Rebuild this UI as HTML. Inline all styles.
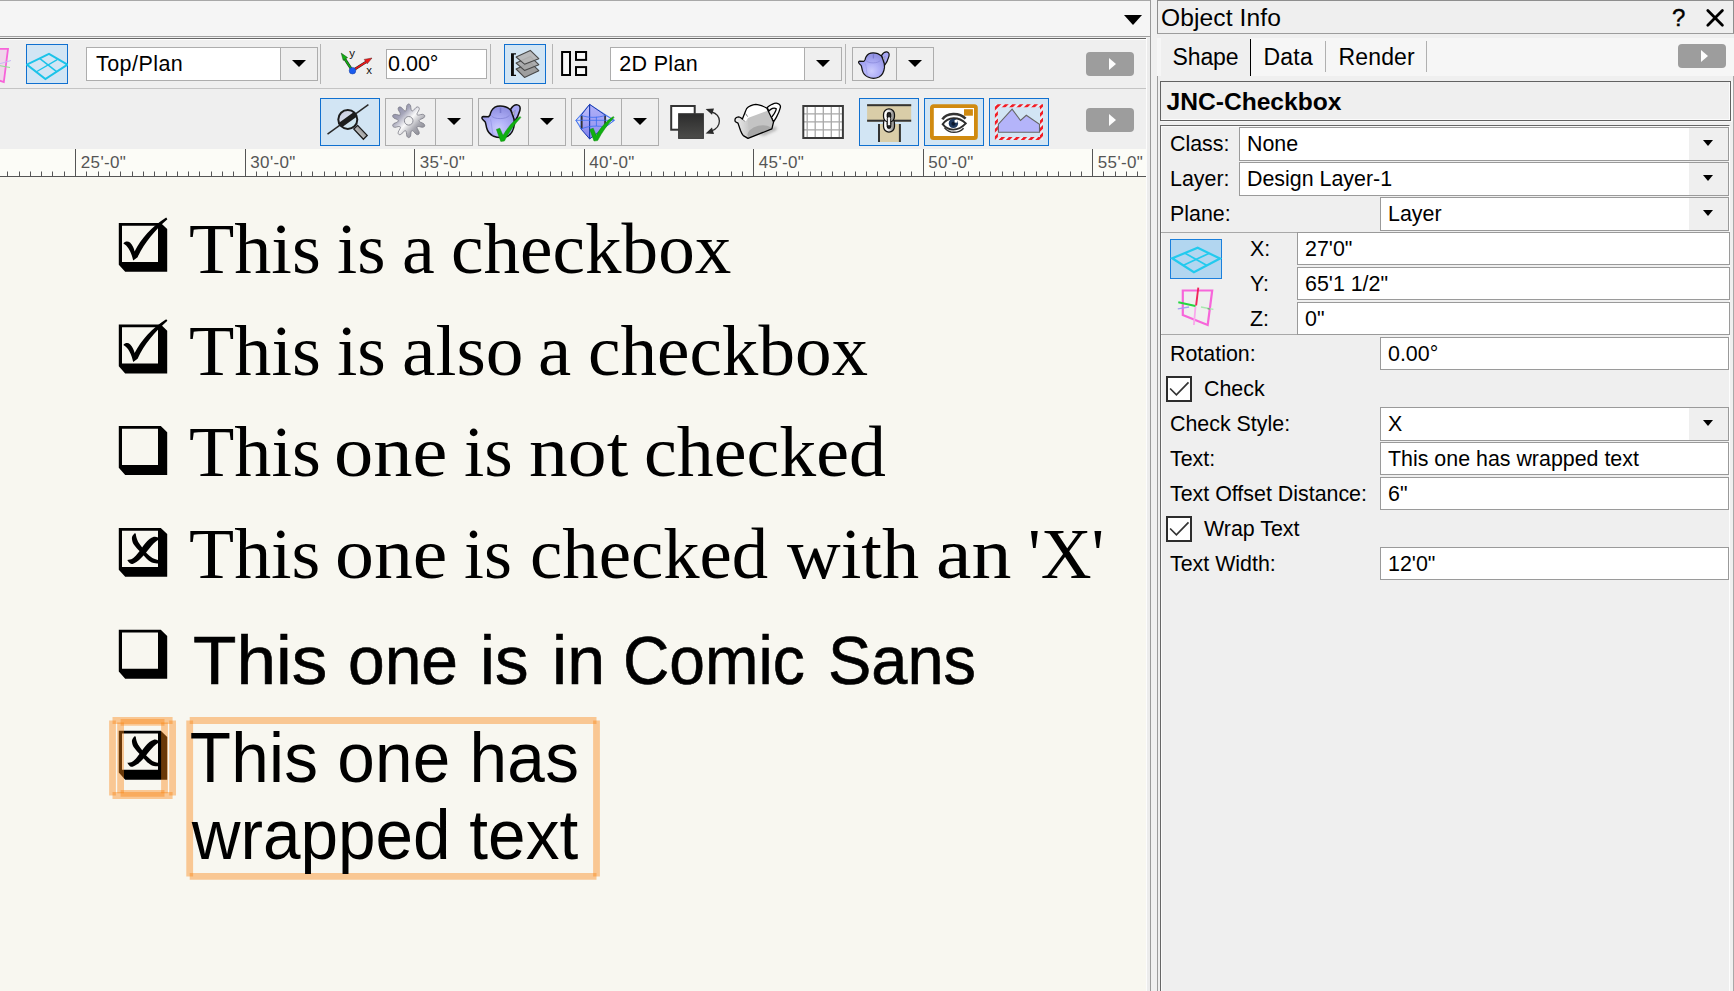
<!DOCTYPE html>
<html>
<head>
<meta charset="utf-8">
<title>Object Info</title>
<style>
*{box-sizing:border-box;margin:0;padding:0}
html,body{width:1734px;height:991px;overflow:hidden}
body{position:relative;background:#efefef;font-family:"Liberation Sans",sans-serif;color:#000}
.abs{position:absolute}
/* top strip */
#topbar{left:0;top:0;width:1150px;height:36px;background:#f5f5f5;border-top:1px solid #a8a8a8}
#tl1{left:0;top:36px;width:1150px;height:1px;background:#a0a0a0}
#tl2{left:0;top:37px;width:1150px;height:1px;background:#f0f0f0}
#tl3{left:0;top:38px;width:1146px;height:1px;background:#666}
#tl4{left:0;top:39px;width:1146px;height:1px;background:#fff}
#strip{left:1146px;top:38px;width:4px;height:953px;background:#ececec;border-left:1px solid #fcfcfc}
#vsep{left:1150px;top:0;width:1px;height:991px;background:#9a9a9a}
#gap{left:1151px;top:0;width:6px;height:991px;background:#f0f0f0}
/* toolbars */
#tb1{left:0;top:40px;width:1146px;height:48px;background:#efefef}
#tbsep{left:0;top:88px;width:1146px;height:1px;background:#c4c4c4}
#tb2{left:0;top:89px;width:1146px;height:60px;background:#efefef}
.btnsel{background:#d2e5f4;border:1px solid #1070d0}
.combo{background:#fff;border:1px solid #adadad}
.combo .arr{position:absolute;right:0;top:0;bottom:0;background:#efefef;border-left:1px solid #adadad}
.tri{position:absolute;width:0;height:0;border-left:8px solid transparent;border-right:8px solid transparent;border-top:9px solid #000}
.vs{width:1px;background:#b4b4b4}
.tbtxt{font-size:21.5px;line-height:24px;white-space:nowrap}
.play{background:#9d9d9d;border-radius:4px}
.play:after{content:"";position:absolute;left:23px;top:6px;border-left:7px solid #fdfdfd;border-top:6px solid transparent;border-bottom:6px solid transparent}
.split{border:1px solid #adadad;background:#efefef}
.split .dv{position:absolute;top:0;bottom:0;width:1px;background:#adadad}
/* ruler */
#ruler{left:0;top:149px;width:1146px;height:28px;background:#fcfcf7;overflow:hidden}
#rulerline{left:0;top:176px;width:1146px;height:1px;background:#555}
.rl{position:absolute;top:5px;font-size:17px;line-height:18px;letter-spacing:0.35px;color:#555;white-space:nowrap}
.mt{position:absolute;top:0;width:1px;height:28px;background:#555}
/* canvas */
#canvas{left:0;top:177px;width:1146px;height:814px;background:#f8f7f0;overflow:hidden}
.ser{position:absolute;font-family:"Liberation Serif",serif;font-size:72.5px;line-height:80px;white-space:nowrap;color:#000}
.san{position:absolute;font-family:"Liberation Sans",sans-serif;white-space:nowrap;color:#000}
.cm{top:620px;font-size:68px;line-height:80px;transform-origin:0 62px;-webkit-text-stroke:0.6px #000}
/* panel */
#ptitle{left:1157px;top:0;width:577px;height:34px;background:#efefef;border:1px solid #8e8e8e;border-bottom-color:#9c9c9c}
#ptabs{left:1157px;top:38px;width:577px;height:38px;background:#f6f6f6}
#pbody{left:1157px;top:76px;width:577px;height:915px;background:#efefef}
.fld{position:absolute;background:#fff;border:1px solid #9a9a9a;height:33px;font-size:21.4px;line-height:32.5px;padding-left:7px;white-space:nowrap;overflow:hidden}
.lbl{position:absolute;font-size:21.4px;line-height:25.5px;white-space:nowrap}
.darr{position:absolute;right:0;top:0;bottom:0;width:39px;background:#efefef}
.darr:after{content:"";position:absolute;left:14px;top:12px;border-left:5px solid transparent;border-right:5px solid transparent;border-top:6px solid #000}
.cb{position:absolute;width:26px;height:26px;background:#fff;border:2px solid #2c2c2c}
</style>
</head>
<body>
<!-- TOP -->
<div id="topbar" class="abs"></div>
<div id="tl1" class="abs"></div><div id="tl2" class="abs"></div><div id="tl3" class="abs"></div><div id="tl4" class="abs"></div>
<div class="abs tri" style="left:1124px;top:15px;border-left-width:9px;border-right-width:9px;border-top-width:10px"></div>
<div id="tb1" class="abs"></div>
<div id="tbsep" class="abs"></div>
<div id="tb2" class="abs"></div>
<div id="strip" class="abs"></div>
<div id="vsep" class="abs"></div>
<div id="gap" class="abs"></div>
<!--TOOLBAR1-->
<!-- pink plane icon (cut off at left) -->
<svg class="abs" style="left:0;top:44px" width="14" height="42" viewBox="0 0 14 42">
<polygon points="-2,4.8 8,4.8 3.8,38 -2,36" fill="#efd6ea" stroke="#f763d9" stroke-width="1.8"/>
<line x1="-1" y1="20" x2="11" y2="16.5" stroke="#c9b8f5" stroke-width="1"/>
<line x1="-1" y1="21.5" x2="10" y2="23.5" stroke="#8fe08f" stroke-width="1"/>
</svg>
<!-- top/plan selected btn -->
<div class="abs btnsel" style="left:26px;top:44px;width:42px;height:40px"></div>
<svg class="abs" style="left:26px;top:44px" width="42" height="40" viewBox="0 0 42 40">
<g fill="none" stroke="#1bc3e9" stroke-linejoin="miter">
<polygon points="23,9.8 41.5,20.6 19.4,35 0.8,20.6" stroke-width="2"/>
<line x1="13.6" y1="14.4" x2="30.6" y2="27.6" stroke-width="1.5"/>
<line x1="31.2" y1="15.6" x2="10" y2="28" stroke-width="1.3"/>
</g>
</svg>
<!-- Top/Plan combo -->
<div class="abs combo" style="left:86px;top:47px;width:232px;height:34px"><div class="arr" style="width:37px"></div></div>
<div class="abs tbtxt" style="left:96px;top:52px;letter-spacing:0.45px">Top/Plan</div>
<div class="abs tri" style="left:292px;top:60px;border-left-width:7px;border-right-width:7px;border-top-width:7px"></div>
<div class="abs vs" style="left:320px;top:44px;height:40px"></div>
<!-- axis icon -->
<svg class="abs" style="left:336px;top:46px" width="42" height="34" viewBox="0 0 42 34">
<line x1="16.5" y1="24.7" x2="8.5" y2="12.5" stroke="#222" stroke-width="2.6"/>
<line x1="16.5" y1="24.7" x2="8.5" y2="12.5" stroke="#12b012" stroke-width="1.6"/>
<polygon points="5.2,7.1 11.6,11.6 7.2,14.4" fill="#12b012" stroke="#1a4a1a" stroke-width="0.5"/>
<line x1="16.5" y1="24.7" x2="30" y2="16" stroke="#222" stroke-width="2.6"/>
<line x1="16.5" y1="24.7" x2="30" y2="16" stroke="#f01818" stroke-width="1.6"/>
<polygon points="36,12 31.2,17.8 28.2,13.4" fill="#f01818" stroke="#5a1a1a" stroke-width="0.5"/>
<circle cx="16.5" cy="24.7" r="3.3" fill="#1a5cf0" stroke="#123a9a" stroke-width="0.5"/>
<text x="13.2" y="10.8" font-family="Liberation Sans" font-size="11.5" fill="#111">y</text>
<text x="30.2" y="27.7" font-family="Liberation Sans" font-size="11.5" fill="#111">x</text>
</svg>
<!-- angle input -->
<div class="abs" style="left:386px;top:49px;width:101px;height:30px;background:#fff;border:1px solid #adadad"></div>
<div class="abs tbtxt" style="left:388px;top:52px">0.00°</div>
<div class="abs vs" style="left:490px;top:44px;height:40px"></div>
<!-- layers btn -->
<div class="abs btnsel" style="left:504px;top:44px;width:42px;height:40px"></div>
<svg class="abs" style="left:504px;top:44px" width="42" height="40" viewBox="0 0 42 40">
<path d="M7,9.2 H12 V10.5 H9.9 V30.7 H12 V32 H7 Z" fill="#0c0c0c"/>
<g stroke="#484848" stroke-width="1.1" stroke-linejoin="round">
<polygon points="12.1,25 26.3,18.4 34.8,26.7 20.5,33.4" fill="#9e9e9e"/>
<polygon points="12.1,19 26.3,12.4 34.8,20.7 20.5,26.4" fill="#a8a8a8" fill-opacity="0.92"/>
<polygon points="12.1,13 26.3,6.4 34.8,14.7 20.5,20.2" fill="#b6b6b6" fill-opacity="0.92"/>
</g>
</svg>
<div class="abs vs" style="left:552px;top:44px;height:40px"></div>
<!-- layout icon -->
<svg class="abs" style="left:560px;top:50px" width="30" height="28" viewBox="0 0 30 28">
<g fill="#f8f8f8" stroke="#000" stroke-width="2">
<rect x="2.1" y="2" width="7.9" height="23"/>
<rect x="16" y="2" width="10.1" height="7.9"/>
<rect x="16" y="17.1" width="10.1" height="7.9"/>
</g>
</svg>
<!-- 2D Plan combo -->
<div class="abs combo" style="left:610px;top:47px;width:232px;height:34px"><div class="arr" style="width:37px"></div></div>
<div class="abs tbtxt" style="left:619.3px;top:52px;letter-spacing:0.32px">2D Plan</div>
<div class="abs tri" style="left:816px;top:60px;border-left-width:7px;border-right-width:7px;border-top-width:7px"></div>
<div class="abs vs" style="left:845px;top:44px;height:40px"></div>
<!-- teapot split -->
<div class="abs split" style="left:852px;top:47px;width:82px;height:34px"><div class="dv" style="left:43px"></div></div>
<svg class="abs" style="left:0;top:0" width="0" height="0"><defs>
<radialGradient id="tpg" cx="0.5" cy="0.72" r="0.62"><stop offset="0" stop-color="#ccccfc"/><stop offset="0.45" stop-color="#b2b2f8"/><stop offset="1" stop-color="#9494e4"/></radialGradient>
<g id="teapot">
<path d="M28.4,7.6 C30,5 32.4,3.7 33.9,3.9 C36,4.3 36.5,6 35.9,8.4 C35.1,11.6 33.6,14.8 31.2,18 L30.4,12 Z" fill="#a8a8f4" stroke="#111" stroke-width="1.2" stroke-linejoin="round"/>
<path d="M29.3,10.8 L32.3,8 L31.2,12.8 Z" fill="#b8b8b8" stroke="#7c7cc0" stroke-width="0.4"/>
<path d="M10.8,13.4 L6.6,13.2 C5.4,13.4 5.2,14.8 6.2,15.6 L8.2,17.6 C8.8,19.4 9,21.2 9.4,22.6 C10,25 12,27.6 15,29 C18,30.4 23,30.4 26,29 C29,27.4 31,24 31.5,19.4 C31.7,17 31.2,14.6 30.2,12.4 C29.6,10.6 28.9,9 28.4,8 C26,5.6 23,4.8 20.1,4.8 C17,4.8 14.4,6.4 13.2,8.6 C12.6,9.8 12.2,11 12.1,11.8 C11.6,12.6 11.2,13 10.8,13.4 Z" fill="url(#tpg)" stroke="#111" stroke-width="1.2" stroke-linejoin="round"/>
<path d="M13.2,12.6 C15,15.6 25,15.8 27.6,12.2" fill="none" stroke="#8686d8" stroke-width="0.7"/>
<path d="M12.4,15.4 C13.4,19 13.4,24 14.6,28.4" fill="none" stroke="#9a9ae8" stroke-width="0.7"/>
<path d="M20.4,6.2 V10.4" fill="none" stroke="#7c7cd0" stroke-width="1.3"/>
</g></defs></svg>
<svg class="abs" style="left:852.7px;top:47.8px" width="40" height="34" viewBox="0 0 40 34"><use href="#teapot"/></svg>
<div class="abs tri" style="left:908px;top:60px;border-left-width:7px;border-right-width:7px;border-top-width:7px"></div>
<!-- play -->
<div class="abs play" style="left:1086px;top:52px;width:48px;height:24px"></div>
<!--/TOOLBAR1-->
<!--TOOLBAR2-->
<!-- magnifier selected -->
<div class="abs btnsel" style="left:320px;top:98px;width:60px;height:48px"></div>
<svg class="abs" style="left:320px;top:98px" width="60" height="48" viewBox="0 0 60 48">
<defs>
<linearGradient id="lens" x1="0" y1="0" x2="1" y2="1"><stop offset="0" stop-color="#c8c8dc"/><stop offset="0.5" stop-color="#d4dcec"/><stop offset="1" stop-color="#c8f2f4"/></linearGradient>
<linearGradient id="hnd" x1="0" y1="1" x2="1" y2="0"><stop offset="0" stop-color="#f0f0f0"/><stop offset="1" stop-color="#6a6a6a"/></linearGradient>
<clipPath id="lc"><circle cx="27.8" cy="21.4" r="9.2"/></clipPath>
</defs>
<line x1="7.5" y1="36.1" x2="48.4" y2="6.6" stroke="#2a2a2a" stroke-width="1.5"/>
<polygon points="33.8,31 37.6,27.4 47.2,37.4 43.4,41.2" fill="url(#hnd)" stroke="#1c1c1c" stroke-width="1.3"/>
<circle cx="27.8" cy="21.4" r="9.5" fill="url(#lens)" stroke="#1c1c1c" stroke-width="2"/>
<line x1="10" y1="34.6" x2="46" y2="8.6" stroke="#1c1c1c" stroke-width="5.4" clip-path="url(#lc)"/>
</svg>
<!-- gear split -->
<div class="abs split" style="left:385px;top:98px;width:88px;height:48px"><div class="dv" style="left:49px"></div></div>
<svg class="abs" style="left:390px;top:102px" width="38" height="38" viewBox="-19 -19 38 38">
<defs><linearGradient id="gg" x1="0" y1="0" x2="1" y2="1"><stop offset="0.05" stop-color="#8888a4"/><stop offset="0.3" stop-color="#a4a4b8"/><stop offset="0.5" stop-color="#fafafa"/><stop offset="0.7" stop-color="#a8a8b0"/><stop offset="0.95" stop-color="#808088"/></linearGradient></defs>
<g transform="translate(-0.3,-0.2)">
<path fill="url(#gg)" stroke="#787884" stroke-width="0.8" d="M0.0,-16.8L0.5,-16.7L1.0,-16.4L1.5,-15.9L1.9,-15.1L2.1,-13.4L2.3,-11.8L2.5,-11.0L2.7,-10.4L2.9,-10.1L3.2,-9.9L3.6,-9.9L4.0,-10.0L4.5,-10.3L5.1,-10.9L6.2,-12.1L7.3,-13.3L8.1,-13.7L8.8,-13.9L9.4,-13.8L9.9,-13.6L10.2,-13.2L10.5,-12.7L10.5,-11.9L10.4,-11.1L9.6,-9.6L8.8,-8.2L8.5,-7.5L8.3,-6.9L8.3,-6.4L8.4,-6.1L8.7,-5.9L9.1,-5.8L9.7,-5.7L10.5,-5.8L12.1,-6.2L13.7,-6.5L14.6,-6.3L15.3,-6.0L15.7,-5.7L16.0,-5.2L16.0,-4.7L15.9,-4.1L15.5,-3.5L14.9,-2.8L13.4,-2.1L11.9,-1.5L11.2,-1.1L10.8,-0.7L10.5,-0.3L10.4,-0.0L10.5,0.3L10.8,0.7L11.2,1.1L11.9,1.5L13.4,2.1L14.9,2.8L15.5,3.5L15.9,4.1L16.0,4.7L16.0,5.2L15.7,5.7L15.3,6.0L14.6,6.3L13.7,6.5L12.1,6.2L10.5,5.8L9.7,5.7L9.1,5.8L8.7,5.9L8.4,6.1L8.3,6.4L8.3,6.9L8.5,7.5L8.8,8.2L9.6,9.6L10.4,11.1L10.5,11.9L10.5,12.7L10.2,13.2L9.9,13.6L9.4,13.8L8.8,13.9L8.1,13.7L7.3,13.3L6.2,12.1L5.1,10.9L4.5,10.3L4.0,10.0L3.6,9.9L3.2,9.9L2.9,10.1L2.7,10.4L2.5,11.0L2.3,11.8L2.1,13.4L1.9,15.1L1.5,15.9L1.0,16.4L0.5,16.7L0.0,16.8L-0.5,16.7L-1.0,16.4L-1.5,15.9L-1.9,15.1L-2.1,13.4L-2.3,11.8L-2.5,11.0L-2.7,10.4L-2.9,10.1L-3.2,9.9L-3.6,9.9L-4.0,10.0L-4.5,10.3L-5.1,10.9L-6.2,12.1L-7.3,13.3L-8.1,13.7L-8.8,13.9L-9.4,13.8L-9.9,13.6L-10.2,13.2L-10.5,12.7L-10.5,11.9L-10.4,11.1L-9.6,9.6L-8.8,8.2L-8.5,7.5L-8.3,6.9L-8.3,6.4L-8.4,6.1L-8.7,5.9L-9.1,5.8L-9.7,5.7L-10.5,5.8L-12.1,6.2L-13.7,6.5L-14.6,6.3L-15.3,6.0L-15.7,5.7L-16.0,5.2L-16.0,4.7L-15.9,4.1L-15.5,3.5L-14.9,2.8L-13.4,2.1L-11.9,1.5L-11.2,1.1L-10.8,0.7L-10.5,0.3L-10.4,0.0L-10.5,-0.3L-10.8,-0.7L-11.2,-1.1L-11.9,-1.5L-13.4,-2.1L-14.9,-2.8L-15.5,-3.5L-15.9,-4.1L-16.0,-4.7L-16.0,-5.2L-15.7,-5.7L-15.3,-6.0L-14.6,-6.3L-13.7,-6.5L-12.1,-6.2L-10.5,-5.8L-9.7,-5.7L-9.1,-5.8L-8.7,-5.9L-8.4,-6.1L-8.3,-6.4L-8.3,-6.9L-8.5,-7.5L-8.8,-8.2L-9.6,-9.6L-10.4,-11.1L-10.5,-11.9L-10.5,-12.7L-10.2,-13.2L-9.9,-13.6L-9.4,-13.8L-8.8,-13.9L-8.1,-13.7L-7.3,-13.3L-6.2,-12.1L-5.1,-10.9L-4.5,-10.3L-4.0,-10.0L-3.6,-9.9L-3.2,-9.9L-2.9,-10.1L-2.7,-10.4L-2.5,-11.0L-2.3,-11.8L-2.1,-13.4L-1.9,-15.1L-1.5,-15.9L-1.0,-16.4L-0.5,-16.7Z"/>
<circle cx="0" cy="0" r="4.3" fill="#f0f0f0" stroke="#8a8a94" stroke-width="1"/>
</g>
</svg>
<div class="abs tri" style="left:447px;top:118px;border-left-width:7px;border-right-width:7px;border-top-width:7px"></div>
<!-- teapot check split -->
<div class="abs split" style="left:478px;top:98px;width:88px;height:48px"><div class="dv" style="left:49px"></div></div>
<svg class="abs" style="left:475.2px;top:100px" width="52" height="46" viewBox="0 0 52 46"><g transform="scale(1.25)"><use href="#teapot"/></g><g transform="translate(4.8,0)"><path d="M16.6,29.4 L20,28.2 L23.2,35.6 C28,27 34,20.4 40.4,16.6 L41,17.6 C35,24 29,32 24.6,41 L21,41.4 Z" fill="#10b010" stroke="#0a8a0a" stroke-width="0.5"/></g></svg>
<div class="abs tri" style="left:540px;top:118px;border-left-width:7px;border-right-width:7px;border-top-width:7px"></div>
<!-- cube check split -->
<div class="abs split" style="left:571px;top:98px;width:88px;height:48px"><div class="dv" style="left:49px"></div></div>
<svg class="abs" style="left:573px;top:100px" width="46" height="44" viewBox="0 0 46 44">
<defs><linearGradient id="cb1" x1="0" y1="0" x2="0" y2="1"><stop offset="0" stop-color="#c6c6fc"/><stop offset="1" stop-color="#7c7cec"/></linearGradient>
<linearGradient id="cb2" x1="0" y1="0" x2="0" y2="1"><stop offset="0" stop-color="#b0b0f8"/><stop offset="1" stop-color="#9090f0"/></linearGradient></defs>
<polygon points="16.6,4.4 41.3,20.3 16.6,38.9 2.9,20.3" fill="#cfd6fa" fill-opacity="0.55" stroke="#3a70f0" stroke-width="0.7"/>
<polygon points="16.6,4.4 8,15.4 8,29 16.6,38.9" fill="url(#cb1)" stroke="#1c3cb0" stroke-width="1"/>
<polygon points="16.6,4.4 32.6,15.4 32.6,27 16.6,38.9" fill="url(#cb2)" stroke="#1c3cb0" stroke-width="1"/>
<line x1="8.8" y1="15.4" x2="8.8" y2="29" stroke="#333" stroke-width="1.6"/>
<line x1="32" y1="15.4" x2="32" y2="27" stroke="#333" stroke-width="1.6"/>
<line x1="16.6" y1="4.4" x2="16.6" y2="38.9" stroke="#1c3cb0" stroke-width="1"/>
<g fill="none" stroke="#3a6cf0" stroke-width="0.8">
<path d="M2.9,20.3 H41.3"/><path d="M8,15.4 C16,18 24,18 32.6,15.4"/><path d="M8,29 C16,25.6 24,25.6 32.6,27"/><path d="M23.4,16.8 V26"/><path d="M2.9,20.3 L8,15.4 M2.9,20.3 L8,29 M41.3,20.3 L32.6,15.4 M41.3,20.3 L32.6,27"/>
</g>
<path d="M16.8,29.4 L20.2,28.2 L23.2,35.4 C28,27 34,20.4 40.4,16.6 L41,17.6 C35,24 29,32 24.6,40.6 L21,41 Z" fill="#10b010" stroke="#0a8a0a" stroke-width="0.5"/>
</svg>
<div class="abs tri" style="left:633px;top:118px;border-left-width:7px;border-right-width:7px;border-top-width:7px"></div>
<!-- swap icon -->
<svg class="abs" style="left:668px;top:102px" width="56" height="40" viewBox="0 0 56 40">
<defs><linearGradient id="dk" x1="0" y1="0" x2="0" y2="1"><stop offset="0" stop-color="#2c2c2c"/><stop offset="1" stop-color="#4c4c4a"/></linearGradient></defs>
<rect x="3.2" y="4" width="23.5" height="23.7" fill="#fff" stroke="#333" stroke-width="2"/>
<rect x="10.6" y="11.7" width="24.8" height="24.7" fill="url(#dk)" stroke="#3a3a3a" stroke-width="1"/>
<path d="M43.5,9.8 C54,13 54,25 43.5,29" fill="none" stroke="#2a2a2a" stroke-width="1.3"/>
<polygon points="37.6,7 46,6.6 44,12.8" fill="#2a2a2a"/>
<polygon points="37.6,31.4 46,32 44,25.6" fill="#2a2a2a"/>
</svg>
<!-- gray teapot -->
<svg class="abs" style="left:728px;top:98px" width="60" height="46" viewBox="0 0 60 46">
<defs><clipPath id="tpc"><path d="M7,21.8 C7,20 8.4,19.2 10.7,18.8 C12,18.8 13,20 14.4,21.1 L17.2,13.9 C17.8,12.4 18.2,11.4 18.6,10.7 C19.6,9.4 21,8.4 22.3,7.9 C24,7 26,6.4 27.8,6.3 C29.6,6.6 31.6,7.1 33.4,7.7 C35.4,8.4 37.2,9.2 38.9,10.2 L43.6,20 L45.5,24.1 L43.9,30.9 L20,40.4 L15.3,37.6 C14,36 13.2,34.4 12.5,32.5 L10,25.1 L7.4,23.7 C7,23 6.9,22.4 7,21.8 Z"/></clipPath>
<filter id="bl" x="-50%" y="-50%" width="200%" height="200%"><feGaussianBlur stdDeviation="1.6"/></filter>
<linearGradient id="tlg" x1="0" y1="0" x2="1" y2="0"><stop offset="0" stop-color="#f6f6f6"/><stop offset="1" stop-color="#c4c4c4"/></linearGradient></defs>
<path d="M30,36.5 L44,31 L47,28 L49,31.5 L36,37.5 Z" fill="#000" fill-opacity="0.3" filter="url(#bl)"/>
<path d="M39.2,9.6 C40.8,8.2 42.4,7.2 44.1,6.3 C46,5.4 47.8,5 49.2,5.3 C51.4,6 52.8,7.4 52.4,9.3 C51.6,12.6 50.2,15.8 48.7,18.6 C47.8,20.4 46.6,22.2 45.5,23.9 L43.4,19.6 C44.4,18.2 45.4,16.8 46.4,15.3 C47.4,13.6 48.2,12 48.3,10.7 C47.2,10 45.8,10 44.5,10.4 C43.2,11 42,11.9 40.8,13 Z" fill="#fff" stroke="#000" stroke-width="1.3" stroke-linejoin="round"/>
<path d="M7,21.8 C7,20 8.4,19.2 10.7,18.8 C12,18.8 13,20 14.4,21.1 L17.2,13.9 C17.8,12.4 18.2,11.4 18.6,10.7 C19.6,9.4 21,8.4 22.3,7.9 C24,7 26,6.4 27.8,6.3 C29.6,6.6 31.6,7.1 33.4,7.7 C35.4,8.4 37.2,9.2 38.9,10.2 L43.6,20 L45.5,24.1 L43.9,30.9 L20,40.4 L15.3,37.6 C14,36 13.2,34.4 12.5,32.5 L10,25.1 L7.4,23.7 C7,23 6.9,22.4 7,21.8 Z" fill="#fff"/>
<g clip-path="url(#tpc)">
<polygon points="5,25.6 39.4,12.8 50,34 16,46" fill="#c4c4c4"/>
<polygon points="5,20 19.5,20 22,42 5,42" fill="url(#tlg)"/>
<polygon points="14.4,21.1 18,12 20.4,19.4 17.4,24" fill="#fff"/>
<ellipse cx="31.8" cy="34.6" rx="12.6" ry="7" transform="rotate(-14 31.8 34.6)" fill="#a8a8a8"/>
</g>
<path d="M7,21.8 C7,20 8.4,19.2 10.7,18.8 C12,18.8 13,20 14.4,21.1 L17.2,13.9 C17.8,12.4 18.2,11.4 18.6,10.7 C19.6,9.4 21,8.4 22.3,7.9 C24,7 26,6.4 27.8,6.3 C29.6,6.6 31.6,7.1 33.4,7.7 C35.4,8.4 37.2,9.2 38.9,10.2 L43.6,20 L45.5,24.1 L43.9,30.9 L20,40.4 L15.3,37.6 C14,36 13.2,34.4 12.5,32.5 L10,25.1 L7.4,23.7 C7,23 6.9,22.4 7,21.8 Z" fill="none" stroke="#000" stroke-width="1.3" stroke-linejoin="round"/>
<path d="M17.6,15.6 L19.6,18.6 M14.6,21.2 L17,23.6" fill="none" stroke="#222" stroke-width="0.6"/>
</svg>
<!-- grid -->
<svg class="abs" style="left:800px;top:103px" width="48" height="38" viewBox="0 0 48 38">
<rect x="3.3" y="3" width="39.6" height="32" fill="#fff"/>
<g stroke="#a8a8a8" stroke-width="1.3">
<path d="M7.2,3 V35 M15.2,3 V35 M23.3,3 V35 M31.3,3 V35 M39.3,3 V35"/>
<path d="M3,10.9 H43 M3,18.9 H43 M3,26.9 H43"/>
</g>
<rect x="3.3" y="3" width="39.6" height="32" fill="none" stroke="#3a3a3a" stroke-width="2"/>
</svg>
<!-- link btn -->
<div class="abs btnsel" style="left:859px;top:98px;width:60px;height:48px"></div>
<svg class="abs" style="left:859px;top:98px" width="60" height="48" viewBox="0 0 60 48">
<defs><linearGradient id="ch" x1="0" y1="0" x2="1" y2="0"><stop offset="0" stop-color="#fff"/><stop offset="0.5" stop-color="#e0e0e0"/><stop offset="1" stop-color="#9a9a9a"/></linearGradient></defs>
<rect x="8.1" y="6.2" width="44.1" height="17.5" fill="#d9cda8"/>
<rect x="8.1" y="6.2" width="44.1" height="2" fill="#333"/>
<rect x="8.1" y="21.7" width="44.1" height="2" fill="#333"/>
<rect x="19" y="26" width="22.9" height="18" fill="#d9cda8"/>
<rect x="19" y="26" width="2" height="18" fill="#333"/>
<rect x="39.9" y="26" width="2" height="18" fill="#333"/>
<rect x="26.4" y="21.4" width="7.2" height="10.8" rx="3.6" fill="#2a2a2a" stroke="#111" stroke-width="5"/>
<rect x="26.4" y="21.4" width="7.2" height="10.8" rx="3.6" fill="none" stroke="url(#ch)" stroke-width="2.5"/>
<rect x="26.4" y="12.8" width="7.2" height="9.6" rx="3.6" fill="#2a2a2a" stroke="#111" stroke-width="5"/>
<rect x="26.4" y="12.8" width="7.2" height="9.6" rx="3.6" fill="none" stroke="url(#ch)" stroke-width="2.5"/>
<rect x="28.3" y="18.6" width="3.4" height="9.4" rx="1.7" fill="#f2f2f2" stroke="#111" stroke-width="1"/>
</svg>
<!-- eye btn -->
<div class="abs btnsel" style="left:924px;top:98px;width:60px;height:48px"></div>
<svg class="abs" style="left:924px;top:98px" width="60" height="48" viewBox="0 0 60 48">
<rect x="7.9" y="8.1" width="44" height="31.9" rx="1.6" fill="#fff" stroke="#d08a10" stroke-width="3.8"/>
<rect x="40" y="11.2" width="8.9" height="6.5" fill="#d08a10"/>
<path d="M18.6,26.2 C24,18.4 34.6,18.4 41.8,25.4 C34,33.8 24,33.2 18.6,26.2 Z" fill="#fff" stroke="#2c2c2c" stroke-width="1.9"/>
<circle cx="29.4" cy="25.4" r="4.7" fill="#1f3a60"/>
<circle cx="29.4" cy="25.8" r="2" fill="#0c1a30"/>
<rect x="30.6" y="22" width="2.8" height="2.6" fill="#fff"/>
<path d="M18.4,21.4 C22.6,14.6 35,14 41.6,20.6" fill="none" stroke="#333" stroke-width="2.6"/>
<path d="M20.4,29.6 C25.4,36 34.4,35.6 39.6,30.2" fill="none" stroke="#333" stroke-width="1.5"/>
</svg>
<!-- image btn -->
<div class="abs btnsel" style="left:989px;top:98px;width:60px;height:48px"></div>
<svg class="abs" style="left:989px;top:98px" width="60" height="48" viewBox="0 0 60 48">
<defs><pattern id="hz" width="5.2" height="5.2" patternUnits="userSpaceOnUse" patternTransform="rotate(-45)"><rect width="5.2" height="5.2" fill="#e8eef8"/><rect width="5.2" height="2.7" fill="#f21c24"/></pattern></defs>
<path fill="url(#hz)" fill-rule="evenodd" d="M5.9,6.2 H54 V41.9 H5.9 Z M8.9,9.2 V38.9 H51 V9.2 Z"/>
<polygon points="9.4,34.3 9.4,26.2 23.1,11.2 31.5,22.5 37.3,17.3 50.5,26.2 50.5,34.3" fill="#b4b4fa" stroke="#666" stroke-width="1.1"/>
</svg>
<div class="abs play" style="left:1086px;top:108px;width:48px;height:24px"></div>
<!--/TOOLBAR2-->
<!--RULER-->
<div id="ruler" class="abs">
<svg class="abs" style="left:0;top:0" width="1147" height="28"><path d="M7.5,22.5V28M19.5,22.5V28M30.5,22.5V28M41.5,22.5V28M52.5,22.5V28M64.5,22.5V28M75.5,0V28M86.5,22.5V28M98.5,22.5V28M109.5,22.5V28M120.5,22.5V28M132.5,22.5V28M143.5,22.5V28M154.5,22.5V28M166.5,22.5V28M177.5,22.5V28M188.5,22.5V28M199.5,22.5V28M211.5,22.5V28M222.5,22.5V28M233.5,22.5V28M245.5,0V28M256.5,22.5V28M267.5,22.5V28M279.5,22.5V28M290.5,22.5V28M301.5,22.5V28M312.5,22.5V28M324.5,22.5V28M335.5,22.5V28M346.5,22.5V28M358.5,22.5V28M369.5,22.5V28M380.5,22.5V28M392.5,22.5V28M403.5,22.5V28M414.5,0V28M425.5,22.5V28M437.5,22.5V28M448.5,22.5V28M459.5,22.5V28M471.5,22.5V28M482.5,22.5V28M493.5,22.5V28M505.5,22.5V28M516.5,22.5V28M527.5,22.5V28M538.5,22.5V28M550.5,22.5V28M561.5,22.5V28M572.5,22.5V28M584.5,0V28M595.5,22.5V28M606.5,22.5V28M618.5,22.5V28M629.5,22.5V28M640.5,22.5V28M651.5,22.5V28M663.5,22.5V28M674.5,22.5V28M685.5,22.5V28M697.5,22.5V28M708.5,22.5V28M719.5,22.5V28M731.5,22.5V28M742.5,22.5V28M753.5,0V28M764.5,22.5V28M776.5,22.5V28M787.5,22.5V28M798.5,22.5V28M810.5,22.5V28M821.5,22.5V28M832.5,22.5V28M844.5,22.5V28M855.5,22.5V28M866.5,22.5V28M877.5,22.5V28M889.5,22.5V28M900.5,22.5V28M911.5,22.5V28M923.5,0V28M934.5,22.5V28M945.5,22.5V28M957.5,22.5V28M968.5,22.5V28M979.5,22.5V28M990.5,22.5V28M1002.5,22.5V28M1013.5,22.5V28M1024.5,22.5V28M1036.5,22.5V28M1047.5,22.5V28M1058.5,22.5V28M1070.5,22.5V28M1081.5,22.5V28M1092.5,0V28M1103.5,22.5V28M1115.5,22.5V28M1126.5,22.5V28M1137.5,22.5V28" stroke="#555" stroke-width="1" fill="none"/></svg>
<div class="rl" style="left:80.8px">25'-0&quot;</div>
<div class="rl" style="left:250.3px">30'-0&quot;</div>
<div class="rl" style="left:419.8px">35'-0&quot;</div>
<div class="rl" style="left:589.3px">40'-0&quot;</div>
<div class="rl" style="left:758.8px">45'-0&quot;</div>
<div class="rl" style="left:928.3px">50'-0&quot;</div>
<div class="rl" style="left:1097.8px">55'-0&quot;</div>
</div>
<div id="rulerline" class="abs"></div>
<!--/RULER-->
<!--CANVAS-->
<div id="canvas" class="abs"></div>
<svg class="abs" style="left:0;top:177px" width="1147" height="814" viewBox="0 177 1147 814">
<defs>
<path id="bx" d="M0,0 H42 L48.4,6.2 V48.9 H6.4 L0,41.8 Z M3.2,2.8 V39 H39.2 V2.8 Z" fill-rule="evenodd" fill="#000"/>
<path id="ck" d="M4.6,20.5 C6.2,18.3 9.2,17.9 11.2,19.7 C13.7,22.1 15.2,25.5 15.8,28.5 C22.2,16.1 33.2,3.6 47.4,-5.3 L48.6,-3.7 C36.2,7.1 25.2,20.1 18.8,34.3 L14.4,37.5 C12.7,30.1 9.7,23.1 4.6,20.5 Z" fill="#000"/>
<g id="xm" fill="#000">
<path d="M16.2,5.2 C14,7 13,9 13.1,10.5 C13.3,13 14,15 15.2,16.8 C17,19.4 19,21.4 20.8,23.2 C23,25.6 25.4,28.4 27.9,30.9 C30,33 32.4,34.6 35,35.2 C36.5,35.5 38,35.6 39.2,35.5 L39.2,32 C37,31.6 35,31 33.6,30.2 C31.5,28.8 29.6,27 27.9,25.3 C26.4,23.6 25,21.8 23.7,20 C22,17.6 20.5,15.6 19.4,14 C18,11.4 17.2,8.6 17,6.2 Z"/>
<path d="M39.2,9.6 C37.6,8.8 36.4,8.7 35,8.9 C33.4,9.4 32,10.2 30.7,11.2 C29.2,12.4 27.8,13.8 26.5,15.4 C25,17.2 23.6,19.2 22.3,21 C21,22.8 19.6,24.8 18,26.7 C16.6,28.4 15.2,29.8 13.8,30.6 C12,31.6 10.2,32 8.5,32 C9.2,33.4 10,34.4 10.9,35.2 C11.8,35.9 12.8,36.2 13.8,36 C15.2,35.6 16.6,34.8 18,33.8 C19.6,32.8 21,31.6 22.3,30.2 C23.8,28.8 25.2,27.2 26.5,25.6 C28,23.8 29.4,22 30.7,20.3 C32,18.6 33.4,17 35,15.4 C36.4,14 37.8,13 39.2,12.2 Z"/>
</g>
</defs>
<use href="#bx" x="118.8" y="222.9"/><use href="#ck" x="118.8" y="222.9"/>
<use href="#bx" x="118.8" y="324.5"/><use href="#ck" x="118.8" y="324.5"/>
<use href="#bx" x="118.8" y="426"/>
<use href="#bx" x="118.8" y="527.9"/><use href="#xm" x="118.8" y="527.9"/>
<use href="#bx" x="118.8" y="629.8"/>
<use href="#bx" x="118.8" y="730.8"/><use href="#xm" x="118.8" y="730.8"/>
<!-- selection highlights -->
<g fill="none" stroke="#fa8513" stroke-opacity="0.42" stroke-width="6.8">
<path d="M112.5,720.5V795.5"/><path d="M172.6,720.5V795.5"/><path d="M112.5,720.5H172.6"/><path d="M112.5,795.5H172.6"/>
<path d="M120.6,722.4V793.3"/><path d="M164.5,722.4V793.3"/><path d="M120.6,722.4H164.5"/><path d="M120.6,793.3H164.5"/>
<path d="M189.7,720.5V876.4"/><path d="M596.5,720.5V876.4"/><path d="M189.7,720.5H596.5"/><path d="M189.7,876.4H596.5"/>
</g>
</svg>
<div class="ser" id="t1_0" style="left:189.0px;top:209px;transform-origin:0 50%;transform:scaleX(1.022)">This</div>
<div class="ser" id="t1_1" style="left:336.8px;top:209px;transform-origin:0 50%;transform:scaleX(1.002)">is</div>
<div class="ser" id="t1_2" style="left:402.4px;top:209px;transform-origin:0 50%;transform:scaleX(1.017)">a</div>
<div class="ser" id="t1_3" style="left:451.4px;top:209px;transform-origin:0 50%;transform:scaleX(1.009)">checkbox</div>
<div class="ser" id="t2_0" style="left:189.0px;top:310.5px;transform-origin:0 50%;transform:scaleX(1.023)">This</div>
<div class="ser" id="t2_1" style="left:337.0px;top:310.5px;transform-origin:0 50%;transform:scaleX(1.011)">is</div>
<div class="ser" id="t2_2" style="left:401.5px;top:310.5px;transform-origin:0 50%;transform:scaleX(1.040)">also</div>
<div class="ser" id="t2_3" style="left:537.9px;top:310.5px;transform-origin:0 50%;transform:scaleX(1.031)">a</div>
<div class="ser" id="t2_4" style="left:587.6px;top:310.5px;transform-origin:0 50%;transform:scaleX(1.008)">checkbox</div>
<div class="ser" id="t3_0" style="left:189.0px;top:412px;transform-origin:0 50%;transform:scaleX(1.023)">This</div>
<div class="ser" id="t3_1" style="left:334.3px;top:412px;transform-origin:0 50%;transform:scaleX(1.083)">one</div>
<div class="ser" id="t3_2" style="left:464.4px;top:412px;transform-origin:0 50%;transform:scaleX(1.009)">is</div>
<div class="ser" id="t3_3" style="left:528.7px;top:412px;transform-origin:0 50%;transform:scaleX(1.071)">not</div>
<div class="ser" id="t3_4" style="left:643.8px;top:412px;transform-origin:0 50%;transform:scaleX(1.019)">checked</div>
<div class="ser" id="t4_0" style="left:188.8px;top:513.5px;transform-origin:0 50%;transform:scaleX(1.019)">This</div>
<div class="ser" id="t4_1" style="left:335.4px;top:513.5px;transform-origin:0 50%;transform:scaleX(1.073)">one</div>
<div class="ser" id="t4_2" style="left:464.4px;top:513.5px;transform-origin:0 50%;transform:scaleX(0.991)">is</div>
<div class="ser" id="t4_3" style="left:529.8px;top:513.5px;transform-origin:0 50%;transform:scaleX(1.003)">checked</div>
<div class="ser" id="t4_4" style="left:787.2px;top:513.5px;transform-origin:0 50%;transform:scaleX(1.025)">with</div>
<div class="ser" id="t4_5" style="left:935.5px;top:513.5px;transform-origin:0 50%;transform:scaleX(1.102)">an</div>
<div class="ser" id="t4_6" style="left:1028.3px;top:513.5px;transform-origin:0 50%;transform:scaleX(0.971)">'X'</div>
<div class="san cm" id="w0" style="left:193.0px;transform:scaleX(1.046)">This</div>
<div class="san cm" id="w1" style="left:348.3px;transform:scaleX(0.970)">one</div>
<div class="san cm" id="w2" style="left:480.1px;transform:scaleX(0.986)">is</div>
<div class="san cm" id="w3" style="left:552.0px;transform:scaleX(1.002)">in</div>
<div class="san cm" id="w4" style="left:623.2px;transform:scaleX(0.943)">Comic</div>
<div class="san cm" id="w5" style="left:828.1px;transform:scaleX(0.955)">Sans</div>
<div class="san" id="t6" style="left:189.7px;top:720px;font-size:67.5px;line-height:77px;letter-spacing:0.25px;transform:scaleY(1.035);transform-origin:0 61.8px">This one has</div>
<div class="san" id="t7" style="left:191.7px;top:797.2px;font-size:67.5px;line-height:77px;transform:scaleY(1.035);transform-origin:0 61.8px">wrapped text</div>
<!--/CANVAS-->
<!--PANEL-->
<div id="ptitle" class="abs"></div>
<div class="abs" style="left:1161px;top:3px;font-size:24.6px;line-height:30.5px;letter-spacing:0.1px;white-space:nowrap">Object Info</div>
<div class="abs" style="left:1672px;top:3px;font-size:24px;line-height:30px;-webkit-text-stroke:0.4px #000">?</div>
<svg class="abs" style="left:1704px;top:7px" width="22" height="22" viewBox="0 0 22 22"><path d="M3.8,3.6 L18.4,18.2 M18.4,3.6 L3.8,18.2" stroke="#000" stroke-width="2.8" stroke-linecap="round" fill="none"/></svg>
<div id="ptabs" class="abs"></div>
<div class="abs" style="left:1161px;top:38px;width:89px;height:38px;background:#efefef"></div>
<div class="abs" style="left:1250px;top:39px;width:1px;height:37px;background:#000"></div>
<div class="abs" style="left:1325px;top:41px;width:1px;height:31px;background:#b0b0b0"></div>
<div class="abs" style="left:1426px;top:41px;width:1px;height:31px;background:#b0b0b0"></div>
<div class="abs" style="left:1172.5px;top:43px;font-size:23px;line-height:28px;letter-spacing:-0.1px;white-space:nowrap">Shape</div>
<div class="abs" style="left:1263.5px;top:43px;font-size:23px;line-height:28px;letter-spacing:0.2px;white-space:nowrap">Data</div>
<div class="abs" style="left:1338.5px;top:43px;font-size:23px;line-height:28px;letter-spacing:0.15px;white-space:nowrap">Render</div>
<div class="abs play" style="left:1678px;top:44px;width:48px;height:24px"></div>
<div id="pbody" class="abs"></div>
<!-- panel borders -->
<div class="abs" style="left:1157px;top:76px;width:1px;height:915px;background:#9c9c9c"></div>

<div class="abs" style="left:1733px;top:76px;width:1px;height:915px;background:#a8a8a8"></div>
<!-- name box -->
<div class="abs" style="left:1160px;top:81px;width:571px;height:40px;border:1px solid #626262;background:#efefef;box-shadow:inset -1px -1px 0 #fcfcfc,1px 1px 0 #f8f8f8,2px 0 0 #f8f8f8"></div>
<div class="abs" style="left:1166.5px;top:86.5px;font-size:24.6px;font-weight:bold;line-height:30px;white-space:nowrap">JNC-Checkbox</div>
<!-- fields box -->
<div class="abs" style="left:1160px;top:125px;width:570px;height:866px;border:1px solid #666;border-right-color:#fdfdfd;border-bottom:none;background:#efefef;box-shadow:inset 1px 1px 0 #fafafa"></div>
<div class="lbl" style="left:1170px;top:132px">Class:</div>
<div class="fld" style="left:1239px;top:127px;width:490px;height:34px">None<div class="darr"></div></div>
<div class="lbl" style="left:1170px;top:167px">Layer:</div>
<div class="fld" style="left:1239px;top:162px;width:490px;height:34px">Design Layer-1<div class="darr"></div></div>
<div class="lbl" style="left:1170px;top:202px">Plane:</div>
<div class="fld" style="left:1380px;top:197px;width:349px;height:34px">Layer<div class="darr"></div></div>
<div class="abs" style="left:1161px;top:232px;width:569px;height:1px;background:#a8a8a8"></div>
<div class="abs" style="left:1161px;top:334px;width:569px;height:1px;background:#a8a8a8"></div>
<!-- plane icons -->
<div class="abs" style="left:1170px;top:239px;width:52px;height:40px;background:#b2d6f0;border:1px solid #1a7fdc"></div>
<svg class="abs" style="left:1170px;top:239px" width="52" height="40" viewBox="0 0 52 40">
<g fill="none" stroke="#22caee"><polygon points="27.7,8.8 50,19.6 23.9,33.2 2.2,19.3" stroke-width="2.2"/><line x1="15" y1="14.2" x2="37" y2="26.4" stroke-width="1.7"/><line x1="38.8" y1="14.4" x2="13" y2="26.4" stroke-width="1.6"/></g>
</svg>
<svg class="abs" style="left:1174px;top:284px" width="46" height="46" viewBox="0 0 46 46">
<polygon points="8.8,6.5 38.2,6.5 33.7,40.9 8.8,30.9" fill="none" stroke="#f766da" stroke-width="2.2"/>
<line x1="21.5" y1="22.6" x2="19.9" y2="41" stroke="#f9a8ec" stroke-width="1.8"/>
<line x1="3.8" y1="24.8" x2="15" y2="23" stroke="#a89cf4" stroke-width="1.3"/>
<line x1="4.3" y1="18.2" x2="21.5" y2="22" stroke="#25d640" stroke-width="1.9"/>
<line x1="27" y1="23" x2="39.4" y2="25.4" stroke="#a4eaac" stroke-width="1.3"/>
<line x1="33.6" y1="24.6" x2="36" y2="25.1" stroke="#7a9a7c" stroke-width="1.4"/>
<line x1="24.3" y1="3.7" x2="22.1" y2="21.5" stroke="#f0245a" stroke-width="1.9"/>
</svg>
<div class="lbl" style="left:1250px;top:236.5px">X:</div>
<div class="fld" style="left:1297px;top:232px;width:433px;">27'0"</div>
<div class="lbl" style="left:1250px;top:271.5px">Y:</div>
<div class="fld" style="left:1297px;top:267px;width:433px;">65'1 1/2"</div>
<div class="lbl" style="left:1250px;top:306.5px">Z:</div>
<div class="fld" style="left:1297px;top:302px;width:433px;">0"</div>
<div class="lbl" style="left:1170px;top:342px">Rotation:</div>
<div class="fld" style="left:1380px;top:337px;width:349px">0.00°</div>
<div class="cb" style="left:1166px;top:376px"></div>
<svg class="abs" style="left:1166px;top:376px" width="26" height="26" viewBox="0 0 26 26"><path d="M4.1,12.5 L10.4,18.8 L22.5,6.4" fill="none" stroke="#333" stroke-width="1.7"/></svg>
<div class="lbl" style="left:1204px;top:377px">Check</div>
<div class="lbl" style="left:1170px;top:412px">Check Style:</div>
<div class="fld" style="left:1380px;top:407px;width:349px;height:34px">X<div class="darr"></div></div>
<div class="lbl" style="left:1170px;top:447px">Text:</div>
<div class="fld" style="left:1380px;top:442px;width:349px">This one has wrapped text</div>
<div class="lbl" style="left:1170px;top:482px">Text Offset Distance:</div>
<div class="fld" style="left:1380px;top:477px;width:349px">6"</div>
<div class="cb" style="left:1166px;top:516px"></div>
<svg class="abs" style="left:1166px;top:516px" width="26" height="26" viewBox="0 0 26 26"><path d="M4.1,12.5 L10.4,18.8 L22.5,6.4" fill="none" stroke="#333" stroke-width="1.7"/></svg>
<div class="lbl" style="left:1204px;top:517px">Wrap Text</div>
<div class="lbl" style="left:1170px;top:552px">Text Width:</div>
<div class="fld" style="left:1380px;top:547px;width:349px">12'0"</div>
<!--/PANEL-->
</body>
</html>
